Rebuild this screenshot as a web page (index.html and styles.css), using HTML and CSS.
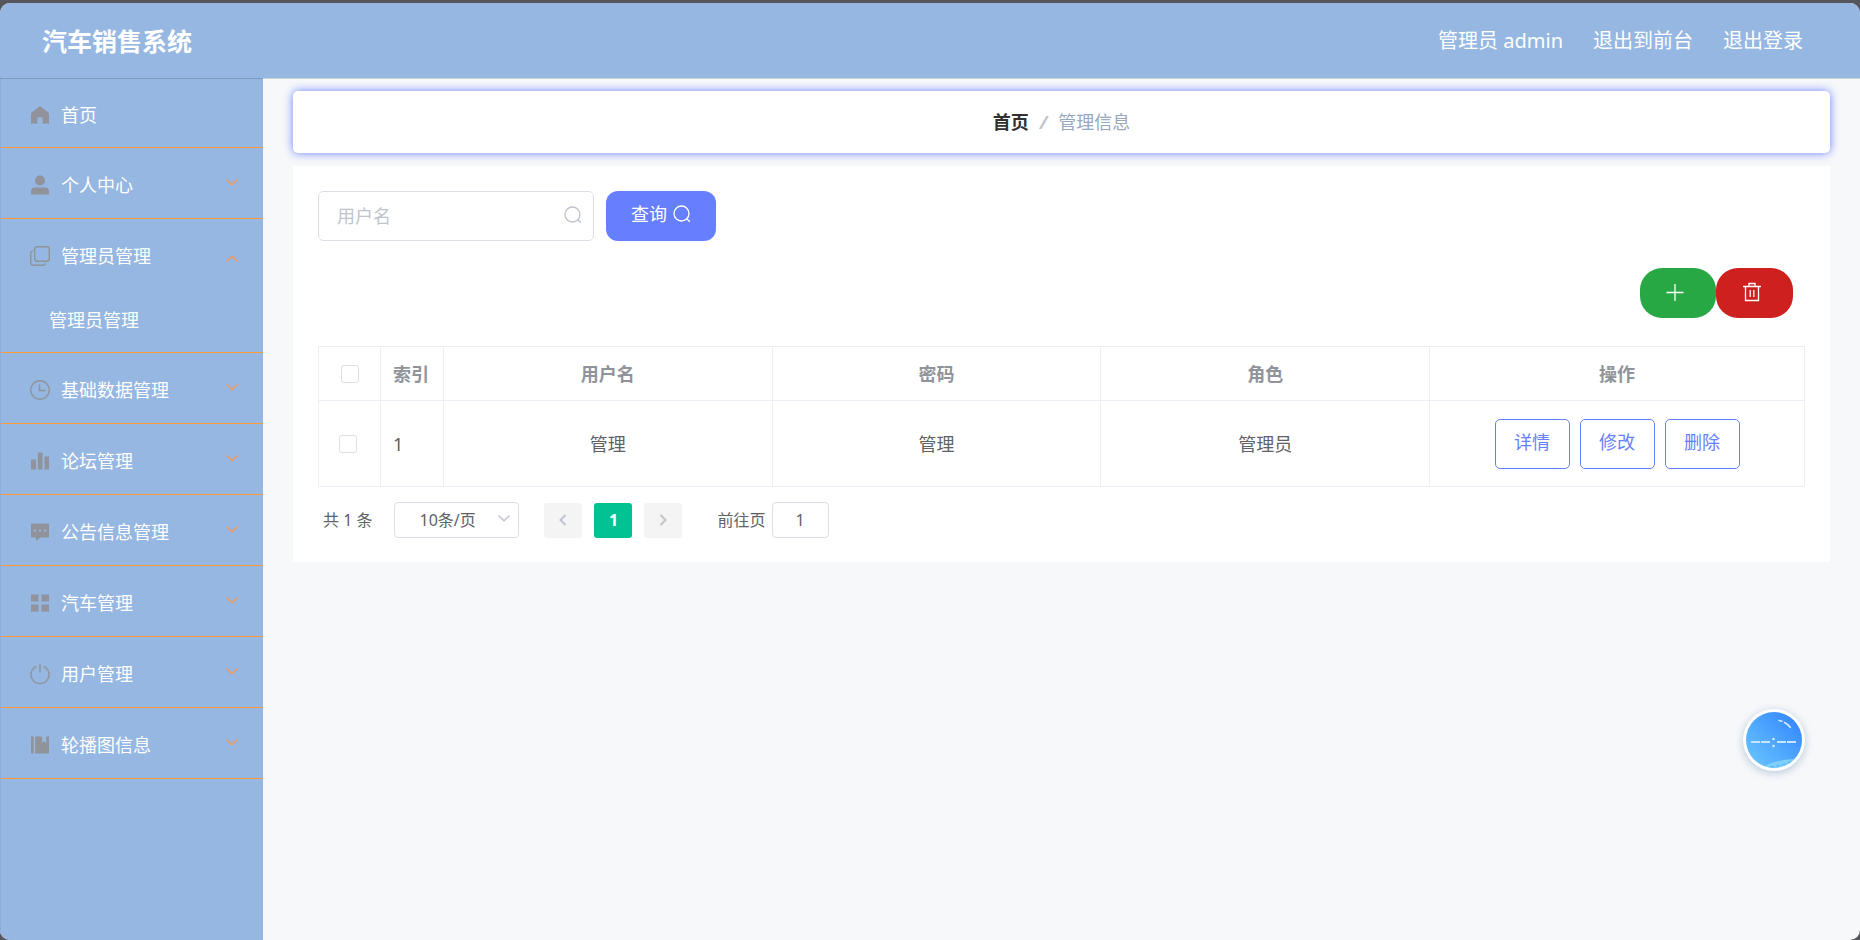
FILE: index.html
```
<!DOCTYPE html>
<html lang="zh-CN">
<head>
	<meta charset="UTF-8">
	<title>汽车销售系统</title>

	<link rel="stylesheet" href="styles.css">
</head>
<body>

<!-- arrow shared by all the menu groups -->
<svg class="defs" width="0" height="0">
	<symbol id="arrow" viewBox="0 0 14 20"><path d="M1.5 4.500l5.500 5.300 5.500-5.300"/></symbol>
	<symbol id="search" viewBox="0 0 18 18"><circle cx="8.500" cy="8.500" r="7.500"/><path d="M13.800 13.800l3 3"/></symbol>
</svg>

<div class="app">
	<header class="header">
		<h1 class="title">汽车销售系统</h1>
		<div class="user">
			<span>管理员 admin</span>
			<a href="#">退出到前台</a>
			<a href="#">退出登录</a>
		</div>
	</header>

	<div class="body">
		<nav class="sidebar">
			<ul class="menu">
				<li class="home">
					<a class="item" href="#">
						<svg class="icon" viewBox="0 0 20 20"><path d="M10 1L1 8v10.500h6.500v-6h5v6H19V8z"/></svg>
						<span>首页</span>
					</a>
				</li>
				<li>
					<a class="item" href="#">
						<svg class="icon" viewBox="0 0 20 20"><circle cx="10" cy="5.500" r="5"/><path d="M1 19.500v-3Q1 12.500 5 12.500h10q4 0 4 4v3z"/></svg>
						<span>个人中心</span>
						<svg class="arrow"><use href="#arrow"/></svg>
					</a>
				</li>
				<li>
					<a class="item" href="#">
						<svg class="icon line" viewBox="0 0 20 20"><rect x="4.700" y=".7" width="14.600" height="14.600" rx="2.500"/><path d="M3 5Q.7 5.500.7 8v8.500q0 2.800 2.800 2.800h9q2.300 0 2.800-2"/></svg>
						<span>管理员管理</span>
						<svg class="arrow open"><use href="#arrow"/></svg>
					</a>
					<a class="sub-item" href="#">管理员管理</a>
				</li>
				<li>
					<a class="item" href="#">
						<svg class="icon line" viewBox="0 0 20 20"><circle cx="10" cy="10" r="9.300"/><path d="M9.500 4.500v6h6"/></svg>
						<span>基础数据管理</span>
						<svg class="arrow"><use href="#arrow"/></svg>
					</a>
				</li>
				<li>
					<a class="item" href="#">
						<svg class="icon" viewBox="0 0 20 20"><path d="M1 8.500h5v10H1zM7.800 1.500h4.700v17H7.800zM14.500 5.500H19v13h-4.500z"/></svg>
						<span>论坛管理</span>
						<svg class="arrow"><use href="#arrow"/></svg>
					</a>
				</li>
				<li>
					<a class="item" href="#">
						<svg class="icon" viewBox="0 0 20 20"><path fill-rule="evenodd" d="M1 1.500h18v14h-8.500L6 19v-3.500H1zM4 7.500v2h2v-2zM9 7.500v2h2v-2zM14 7.500v2h2v-2z"/></svg>
						<span>公告信息管理</span>
						<svg class="arrow"><use href="#arrow"/></svg>
					</a>
				</li>
				<li>
					<a class="item" href="#">
						<svg class="icon" viewBox="0 0 20 20"><path d="M1 1.500h7.500v7H1zM11.500 1.500H19v7h-7.500zM1 11.500h7.500v7H1zM11.500 11.500H19v7h-7.500z"/></svg>
						<span>汽车管理</span>
						<svg class="arrow"><use href="#arrow"/></svg>
					</a>
				</li>
				<li>
					<a class="item" href="#">
						<svg class="icon line" viewBox="0 0 20 20"><path d="M6.500 2.300a9 9 0 1 0 7 0M10 0v8.500"/></svg>
						<span>用户管理</span>
						<svg class="arrow"><use href="#arrow"/></svg>
					</a>
				</li>
				<li>
					<a class="item" href="#">
						<svg class="icon" viewBox="0 0 20 20"><path d="M1 1.500h2.700v17H1zM5.200 1.500h7v6.500l2-1.800 2 1.800V1.500H19v17H5.200z"/></svg>
						<span>轮播图信息</span>
						<svg class="arrow"><use href="#arrow"/></svg>
					</a>
				</li>
			</ul>
		</nav>

		<main class="main">
			<div class="breadcrumb">
				<a href="#">首页</a>
				<i>/</i>
				<span>管理信息</span>
			</div>

			<section class="card">
				<form class="search">
					<div class="search-box">
						<input type="text" placeholder="用户名" aria-label="用户名">
						<svg class="search-icon"><use href="#search"/></svg>
					</div>
					<button class="search-btn" type="button">查询 <svg class="search-icon"><use href="#search"/></svg></button>
				</form>

				<div class="actions">
					<button class="add" type="button" aria-label="新增">
						<svg width="18" height="20" viewBox="0 0 18 20"><path d="M9 2v17M.5 10.500h17"/></svg>
					</button>
					<button class="del" type="button" aria-label="删除">
						<svg width="18" height="20" viewBox="0 0 18 20"><path d="M0 4.500h18M6 4V1.500h6V4M2.500 5v13.500h13V5M7.200 8v7M10.800 8v7"/></svg>
					</button>
				</div>

				<table class="table">
					<colgroup>
						<col class="col-check">
						<col class="col-index">
						<col>
						<col>
						<col>
						<col class="col-ops">
					</colgroup>
					<thead>
						<tr>
							<th><input type="checkbox" aria-label="全选"></th>
							<th class="index">索引</th>
							<th>用户名</th>
							<th>密码</th>
							<th>角色</th>
							<th>操作</th>
						</tr>
					</thead>
					<tbody>
						<tr>
							<td class="check"><input type="checkbox" aria-label="选择"></td>
							<td class="index">1</td>
							<td>管理</td>
							<td>管理</td>
							<td>管理员</td>
							<td>
								<div class="ops">
									<button type="button">详情</button>
									<button type="button">修改</button>
									<button type="button">删除</button>
								</div>
							</td>
						</tr>
					</tbody>
				</table>

				<div class="pagination">
					<span class="total">共 1 条</span>
					<div class="sizes">
						<select aria-label="每页条数">
							<option>10条/页</option>
						</select>
						<svg class="arrow"><use href="#arrow"/></svg>
					</div>
					<div class="pager">
						<button type="button" aria-label="上一页" disabled>
							<svg width="8" height="12" viewBox="0 0 8 12"><path d="M6.500 1l-5 5 5 5"/></svg>
						</button>
						<button class="active" type="button">1</button>
						<button type="button" aria-label="下一页" disabled>
							<svg width="8" height="12" viewBox="0 0 8 12"><path d="M1.500 1l5 5-5 5"/></svg>
						</button>
					</div>
					<label class="jump">前往页 <input type="text" value="1"></label>
				</div>
			</section>
		</main>
	</div>

	<!-- floating clock -->
	<div class="clock">
		<svg width="56" height="56" viewBox="0 0 56 56">
			<defs>
				<linearGradient id="ball" x1="0" y1="1" x2="1" y2="0">
					<stop offset="0" stop-color="#6cc8ff"/>
					<stop offset=".4" stop-color="#55adfe"/>
					<stop offset="1" stop-color="#2f80ff"/>
				</linearGradient>
				<clipPath id="round"><circle cx="28" cy="28" r="28"/></clipPath>
			</defs>
			<g clip-path="url(#round)">
				<path fill="url(#ball)" d="M0 0h56v56H0z"/>
				<path fill="#7fd0fc" d="M18 54q12-6 30-7v9H18z"/>
				<path fill="none" stroke="#4ab4f7" stroke-dasharray="4 2" d="M24 55q12-1 22-6"/>
				<path fill="none" stroke="#d5ebff" stroke-width="1.500" stroke-linecap="round" d="M33 8.500l3 .7M38.500 10.500q4 2 6 5"/>
			</g>
			<path fill="none" stroke="#c5e6ff" stroke-width="2" d="M5 30h9M15 30h9M31 30h9M41 30h9"/>
			<circle cx="27.500" cy="27" r="1.200" fill="#e3f3ff"/>
			<circle cx="27.500" cy="34" r="1.200" fill="#e3f3ff"/>
		</svg>
	</div>
</div>

</body>
</html>
```

FILE: styles.css
```
* {
	box-sizing: border-box;
}

html, body {
	height: 100%;
	margin: 0;
}

body {
	display: flex;
	flex-direction: column;
	padding-top: 3px;
	background: #55565b;
	font-family: "Noto Sans", "Noto Sans CJK SC", sans-serif;
	font-size: 18px;
	line-height: 24px;
	color: #606266;
}

button, input, select {
	margin: 0;
	font: inherit;
	color: inherit;
}

button {
	padding: 0;
	border: 0;
	cursor: pointer;
}

a {
	color: inherit;
	text-decoration: none;
}

svg {
	flex: none;
}

.defs {
	position: absolute;
}

.app {
	flex: 1;
	display: flex;
	flex-direction: column;
	border-radius: 10px;
	overflow: hidden;
	background: #f7f8fa;
}

/* header */
.header {
	position: relative;
	display: flex;
	justify-content: space-between;
	align-items: center;
	height: 75px;
	padding: 0 57px 0 42px;
	background: #95b7e2;
	box-shadow: 0 1px 0 rgba(0, 0, 0, .16);
	color: #fff;
}

.title {
	margin: 0;
	font-size: 25px;
	line-height: 36px;
}

.user {
	display: flex;
	gap: 30px;
	font-size: 20px;
}

.body {
	flex: 1;
	display: flex;
}

/* sidebar */
.sidebar {
	flex: none;
	width: 263px;
	border-left: 1px solid #8dadd5;
	background: #95b7e2;
	color: #fff;
}

.menu {
	margin: 0;
	padding: 0;
	list-style: none;
}

.menu li {
	border-bottom: 1px solid #ff9933;
}

.item {
	display: flex;
	align-items: center;
	height: 70px;
	padding: 3px 24px 0;
}

.home .item {
	height: 69px;
	padding-top: 5px;
}

.icon {
	width: 20px;
	height: 20px;
	margin: 0 11px 0 5px;
	fill: #909399;
}

.icon.line {
	fill: none;
	stroke: #909399;
	stroke-width: 1.4;
}

.arrow {
	width: 14px;
	height: 20px;
	margin-left: auto;
	fill: none;
	stroke: #f39a5c;
	stroke-width: 1.5;
}

.arrow.open {
	transform: scaleY(-1);
	height: 26px;
}

.sub-item {
	display: block;
	padding-left: 48px;
	line-height: 63px;
}

/* content */
.main {
	flex: 1;
	padding: 13px 30px;
}

.breadcrumb {
	display: flex;
	justify-content: center;
	align-items: center;
	gap: 11px;
	height: 62px;
	margin-bottom: 13px;
	border-radius: 5px;
	background: #fff;
	box-shadow: 0 0 10px #667fff;
	color: #97a8be;
}

.breadcrumb a {
	font-weight: bold;
	color: #303133;
}

.breadcrumb i {
	font-weight: bold;
	color: #c0c4cc;
}

.card {
	position: relative;
	padding: 25px 25px 24px;
	background: #fff;
}

.search {
	display: flex;
	gap: 12px;
}

.search-box {
	position: relative;
	width: 276px;
}

.search-box input {
	width: 100%;
	height: 50px;
	padding: 0 40px 1px 18px;
	border: 1px solid #dcdfe6;
	border-radius: 5px;
}

.search-box input::placeholder {
	color: #c0c4cc;
}

.search-icon {
	width: 18px;
	height: 18px;
	fill: none;
	stroke: #c0c4cc;
	stroke-width: 1.3;
}

.search-box .search-icon {
	position: absolute;
	top: 15px;
	right: 12px;
}

.search-btn {
	display: flex;
	align-items: center;
	gap: 6px;
	padding: 0 25px 4px;
	border-radius: 12px;
	background: #667fff;
	color: #fff;
}

.search-btn .search-icon {
	stroke: #fff;
}

.actions {
	display: flex;
	justify-content: flex-end;
	margin: 27px 0 28px;
	padding-right: 12px;
}

.actions button {
	display: flex;
	justify-content: center;
	align-items: center;
	width: 76px;
	height: 50px;
	padding: 0 6px 2px 0;
	border-radius: 22px;
}

.actions .add {
	background: #28a745;
}

.actions .del {
	width: 77px;
	background: #cd201f;
}

.actions svg {
	fill: none;
	stroke: #fff;
	stroke-width: 1.3;
}

/* table */
.table {
	width: 100%;
	table-layout: fixed;
	border-collapse: separate;
	border-spacing: 0;
	border-top: 1px solid #ebeef5;
	border-left: 1px solid #ebeef5;
	text-align: center;
}

.table th, .table td {
	height: 54px;
	padding: 0;
	border-right: 1px solid #ebeef5;
	border-bottom: 1px solid #ebeef5;
}

.table th {
	color: #909399;
}

.table td {
	height: 86px;
}

.col-check {
	width: 62px;
}

.col-index {
	width: 63px;
}

.col-ops {
	width: 375px;
}

.table .index {
	padding-left: 12px;
	text-align: left;
}

.table .check {
	padding-right: 4px;
}

.table input {
	display: block;
	width: 18px;
	height: 18px;
	margin: 0 auto;
	border: 1px solid #dcdfe6;
	border-radius: 3px;
	background: #fff;
	appearance: none;
}

.ops {
	display: flex;
	justify-content: center;
	gap: 10px;
}

.ops button {
	width: 75px;
	height: 50px;
	padding-bottom: 3px;
	border: 1px solid #667fff;
	border-radius: 5px;
	background: #fff;
	color: #667fff;
}

/* pagination */
.pagination {
	display: flex;
	align-items: center;
	margin-top: 15px;
	padding-left: 5px;
	font-size: 16px;
}

.sizes {
	position: relative;
	margin: 0 25px 0 22px;
}

.sizes select {
	display: block;
	width: 125px;
	height: 36px;
	padding: 0 24px;
	border: 1px solid #dcdfe6;
	border-radius: 4px;
	background: #fff;
	appearance: none;
}

.sizes .arrow {
	position: absolute;
	top: 9px;
	right: 8px;
	stroke: #c0c4cc;
}

.pager {
	display: flex;
	gap: 12px;
}

.pager button {
	width: 38px;
	height: 35px;
	border-radius: 3px;
	background: #f4f4f5;
}

.pager .active {
	background: #00c292;
	font-weight: bold;
	color: #fff;
}

.pager svg {
	fill: none;
	stroke: #c0c4cc;
	stroke-width: 2;
}

.jump {
	display: flex;
	align-items: center;
	gap: 6px;
	margin-left: 35px;
}

.jump input {
	width: 57px;
	height: 36px;
	border: 1px solid #dcdfe6;
	border-radius: 4px;
	text-align: center;
}

.clock {
	position: fixed;
	right: 55px;
	bottom: 169px;
	width: 62px;
	height: 62px;
	padding: 3px;
	border-radius: 50%;
	background: #fff;
	box-shadow: 0 2px 8px rgba(60, 110, 160, .35);
}
```
